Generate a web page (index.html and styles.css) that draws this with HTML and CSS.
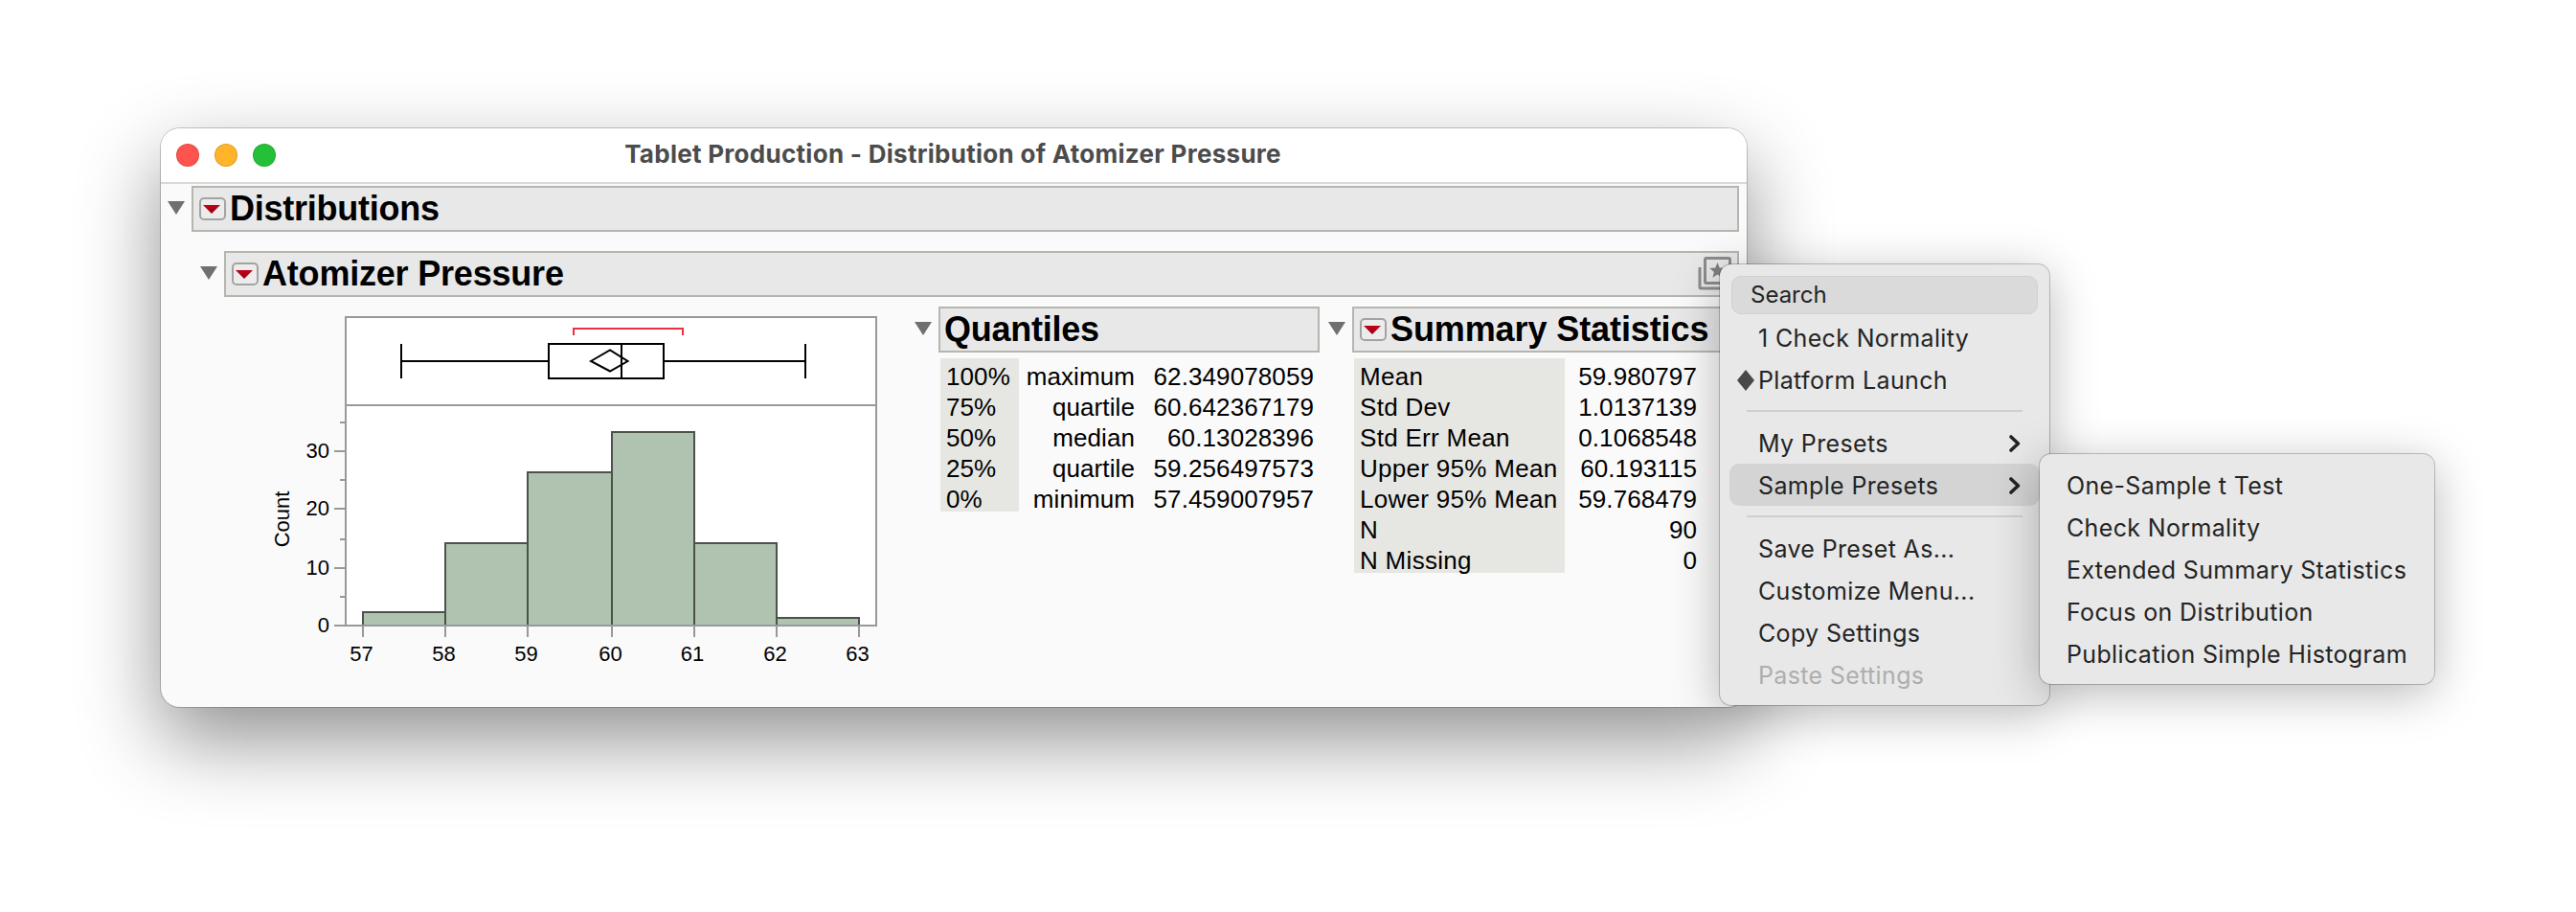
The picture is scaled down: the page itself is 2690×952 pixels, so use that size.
FILE: index.html
```
<!DOCTYPE html>
<html lang="en">
<head>
    <meta charset="UTF-8">
    <title>Tablet Production - Distribution of Atomizer Pressure</title>
    <link rel="stylesheet" href="styles.css">
</head>
<body>
    <div class="window">
        <header class="titlebar">
            <div class="lights">
                <span class="light close"></span>
                <span class="light minimize"></span>
                <span class="light zoom"></span>
            </div>
            <h1>Tablet Production - Distribution of Atomizer Pressure</h1>
        </header>

        <main class="report">
            <div class="outline">
                <span class="disclosure"></span>
                <div class="bar">
                    <span class="hotspot"></span>
                    <h2>Distributions</h2>
                </div>
            </div>

            <div class="outline nested">
                <span class="disclosure"></span>
                <div class="bar">
                    <span class="hotspot"></span>
                    <h2>Atomizer Pressure</h2>
                    <svg class="preset-icon" width="36" height="36" viewBox="0 0 36 36">
                        <path d="M2 11v20.500q0 1.500 1.500 1.500H27" fill="none" stroke="#8c8c8c" stroke-width="3"/>
                        <rect x="7.500" y="1.500" width="26" height="26" rx="1.500" fill="none" stroke="#8c8c8c" stroke-width="3"/>
                        <path d="M20.500 6l2.200 5.600 6 .4-4.600 3.900 1.500 5.900-5.100-3.300-5.100 3.300 1.500-5.900-4.600-3.900 6-.4z" fill="#808080"/>
                    </svg>
                </div>
            </div>

            <div class="results">
                <!-- Box plot and histogram -->
                <svg class="chart" width="640" height="380" viewBox="280 320 640 380">
                    <rect x="361" y="331" width="554" height="322" fill="#fff"/>
                    <g class="bars">
                        <rect x="379" y="639" width="86" height="14"/>
                        <rect x="465" y="567" width="86" height="86"/>
                        <rect x="551" y="493" width="88" height="160"/>
                        <rect x="639" y="451" width="86" height="202"/>
                        <rect x="725" y="567" width="86" height="86"/>
                        <rect x="811" y="645" width="86" height="8"/>
                    </g>
                    <g class="axis">
                        <rect x="361" y="331" width="554" height="322"/>
                        <path d="M361 423H915"/>
                        <path d="M349 471H361M349 531H361M349 593H361M349 653H361"/>
                        <path d="M355 441H361M355 501H361M355 563H361M355 623H361"/>
                        <path d="M379 653V665M465 653V665M551 653V665M639 653V665M725 653V665M811 653V665M897 653V665"/>
                    </g>
                    <path class="shortest-half" d="M599 350V343H713V350"/>
                    <g class="boxplot">
                        <rect x="573" y="359" width="120" height="36"/>
                        <path d="M419 359V395M419 377H573M693 377H841M841 359V395M649 359V395"/>
                        <path d="M617 377L637 365.500L655.500 377L637 387.500Z"/>
                    </g>
                    <g class="labels y">
                        <text x="344" y="478">30</text>
                        <text x="344" y="538">20</text>
                        <text x="344" y="600">10</text>
                        <text x="344" y="660">0</text>
                    </g>
                    <g class="labels x">
                        <text x="377.500" y="690">57</text>
                        <text x="463.500" y="690">58</text>
                        <text x="549.500" y="690">59</text>
                        <text x="637.500" y="690">60</text>
                        <text x="723" y="690">61</text>
                        <text x="809.500" y="690">62</text>
                        <text x="895.500" y="690">63</text>
                        <text transform="translate(302 542) rotate(-90)">Count</text>
                    </g>
                </svg>

                <section class="quantiles">
                    <div class="outline">
                        <span class="disclosure"></span>
                        <div class="bar"><h2>Quantiles</h2></div>
                    </div>
                    <table>
                        <tr><th>100%</th><td>maximum</td><td>62.349078059</td></tr>
                        <tr><th>75%</th><td>quartile</td><td>60.642367179</td></tr>
                        <tr><th>50%</th><td>median</td><td>60.13028396</td></tr>
                        <tr><th>25%</th><td>quartile</td><td>59.256497573</td></tr>
                        <tr><th>0%</th><td>minimum</td><td>57.459007957</td></tr>
                    </table>
                </section>

                <section class="summary">
                    <div class="outline">
                        <span class="disclosure"></span>
                        <div class="bar">
                            <span class="hotspot"></span>
                            <h2>Summary Statistics</h2>
                        </div>
                    </div>
                    <table>
                        <tr><th>Mean</th><td>59.980797</td></tr>
                        <tr><th>Std Dev</th><td>1.0137139</td></tr>
                        <tr><th>Std Err Mean</th><td>0.1068548</td></tr>
                        <tr><th>Upper 95% Mean</th><td>60.193115</td></tr>
                        <tr><th>Lower 95% Mean</th><td>59.768479</td></tr>
                        <tr><th>N</th><td>90</td></tr>
                        <tr><th>N Missing</th><td>0</td></tr>
                    </table>
                </section>
            </div>
        </main>
    </div>

    <!-- Presets menu -->
    <nav class="menu presets">
        <div class="search">Search</div>
        <div class="item">1 Check Normality</div>
        <div class="item">
            <svg class="mark" width="18" height="22" viewBox="0 0 18 22"><path d="M9 0L18 11L9 22L0 11Z"/></svg>
            Platform Launch
        </div>
        <hr>
        <div class="item">
            My Presets
            <svg class="chevron" width="14" height="20" viewBox="0 0 14 20"><path d="M3 3L10.500 10L3 17"/></svg>
        </div>
        <div class="item selected">
            Sample Presets
            <svg class="chevron" width="14" height="20" viewBox="0 0 14 20"><path d="M3 3L10.500 10L3 17"/></svg>
        </div>
        <hr>
        <div class="item">Save Preset As...</div>
        <div class="item">Customize Menu...</div>
        <div class="item">Copy Settings</div>
        <div class="item disabled">Paste Settings</div>
    </nav>

    <nav class="menu submenu">
        <div class="item">One-Sample t Test</div>
        <div class="item">Check Normality</div>
        <div class="item">Extended Summary Statistics</div>
        <div class="item">Focus on Distribution</div>
        <div class="item">Publication Simple Histogram</div>
    </nav>
</body>
</html>
```
FILE: styles.css
```
* {
    box-sizing: border-box;
}

body {
    margin: 0;
    height: 952px;
    position: relative;
    overflow: hidden;
    background: #ffffff;
    color: #000000;
    font-family: "Liberation Sans", Arial, sans-serif;
    font-size: 26px;
}

h1,
h2 {
    margin: 0;
}

/* Window */
.window {
    position: absolute;
    left: 168px;
    top: 134px;
    width: 1656px;
    height: 604px;
    border-radius: 20px;
    background: #fafafa;
    box-shadow: 0 0 0 1px rgba(0, 0, 0, 0.2), 0 34px 84px rgba(0, 0, 0, 0.44);
    overflow: hidden;
}

.titlebar {
    height: 58px;
    display: grid;
    grid-template-columns: 160px 1fr 162px;
    align-items: center;
    background: #ffffff;
    border-bottom: 2px solid #d8d8d8;
}

.titlebar h1 {
    font-family: Inter, sans-serif;
    font-size: 26px;
    line-height: 54px;
    height: 56px;
    font-weight: 700;
    letter-spacing: 0.28px;
    text-align: center;
    white-space: nowrap;
    color: #4c4c4c;
}

.lights {
    display: flex;
    gap: 16px;
    padding-left: 16px;
}

.light {
    width: 24px;
    height: 24px;
    border-radius: 50%;
    border: 1px solid rgba(0, 0, 0, 0.12);
}

.close {
    background: #ff544d;
}

.minimize {
    background: #ffb429;
}

.zoom {
    background: #24c138;
}

/* Outline nodes */
.report {
    padding: 2px 8px 0 7px;
}

.outline {
    display: flex;
    gap: 7px;
}

.nested {
    margin: 20px 0 10px 34px;
}

.disclosure {
    width: 18px;
    height: 14px;
    margin-top: 16px;
    background: #707070;
    clip-path: polygon(0 0, 100% 0, 50% 100%);
}

.bar {
    flex: 1;
    height: 48px;
    display: flex;
    align-items: center;
    padding: 0 6px;
    border: 2px solid #b5b6ae;
    background: #e8e8e8;
}

.bar h2 {
    margin-left: -2px;
    font-size: 36px;
    line-height: 44px;
    letter-spacing: -0.25px;
    white-space: nowrap;
}

.bar .hotspot + h2 {
    margin-left: 4px;
}

.nested .bar h2 {
    letter-spacing: -0.2px;
}

.summary .bar h2 {
    letter-spacing: -0.1px;
}

.hotspot {
    width: 28px;
    height: 24px;
    border: 2px solid #a3a3a3;
    border-radius: 5px;
    background: #ececec;
}

.hotspot::before {
    content: "";
    display: block;
    width: 18px;
    height: 9px;
    margin: 6px 0 0 2px;
    background: linear-gradient(#c8001c, #90000c);
    clip-path: polygon(0 0, 100% 0, 50% 100%);
}

.preset-icon {
    margin-left: auto;
    margin-right: -1px;
}

/* Results */
.results {
    display: flex;
    align-items: flex-start;
}

.chart {
    margin-left: 105px;
}

.bars rect {
    fill: #b0c3b1;
    stroke: #4b524a;
    stroke-width: 2;
}

.axis {
    fill: none;
    stroke: #999999;
    stroke-width: 2;
}

.boxplot {
    fill: none;
    stroke: #000000;
    stroke-width: 2;
}

.shortest-half {
    fill: none;
    stroke: #ee2f43;
    stroke-width: 2;
}

.labels {
    font-size: 22px;
}

.labels.x {
    text-anchor: middle;
}

.labels.y {
    text-anchor: end;
}

.quantiles {
    width: 423px;
    margin-left: 35px;
}

.summary {
    flex: 1;
    margin-left: 9px;
}

table {
    margin: 6px 0 0 27px;
    border-collapse: collapse;
    table-layout: fixed;
}

th,
td {
    height: 32px;
    padding: 6px 0 0;
    line-height: 26px;
    letter-spacing: 0.1px;
    white-space: nowrap;
    text-align: right;
}

th {
    padding-left: 6px;
    font-weight: normal;
    text-align: left;
    background: #e6e7e2;
}

.quantiles th {
    width: 82px;
}

.quantiles td:nth-child(2) {
    width: 121px;
}

.quantiles td:nth-child(3) {
    width: 187px;
}

.summary th {
    width: 220px;
    letter-spacing: 0.3px;
}

.summary td {
    width: 138px;
}

/* Menus */
.menu {
    position: absolute;
    padding: 10px;
    border-radius: 12px;
    background: #e8e8e8;
    box-shadow: 0 0 0 1px rgba(0, 0, 0, 0.22), 0 10px 50px rgba(0, 0, 0, 0.28);
    font-family: Inter, sans-serif;
    font-size: 25px;
    letter-spacing: 0.35px;
    color: #242424;
}

.presets {
    left: 1796px;
    top: 276px;
    width: 344px;
    height: 460px;
}

.submenu {
    left: 2130px;
    top: 474px;
    width: 412px;
    height: 240px;
}

.search {
    height: 40px;
    margin: 2px 2px 2px;
    padding-left: 19px;
    border: 1px solid #d0d0d0;
    border-radius: 10px;
    background: #dadada;
    font-size: 24px;
    letter-spacing: 0;
    line-height: 38px;
}

.item {
    position: relative;
    display: flex;
    align-items: center;
    justify-content: space-between;
    height: 44px;
    padding: 2px 19px 0 30px;
    border-radius: 10px;
    white-space: nowrap;
}

.submenu .item {
    padding: 2px 0 0 18px;
}

.selected {
    background: #d4d4d4;
}

.disabled {
    color: #aeaeae;
}

.mark {
    position: absolute;
    left: 8px;
    top: 12px;
    fill: #484848;
}

.chevron {
    fill: none;
    stroke: #242424;
    stroke-width: 3.6;
    stroke-linecap: round;
    stroke-linejoin: round;
}

.menu hr {
    height: 2px;
    margin: 10px 18px;
    border: 0;
    background: #cfcfcf;
}
```
